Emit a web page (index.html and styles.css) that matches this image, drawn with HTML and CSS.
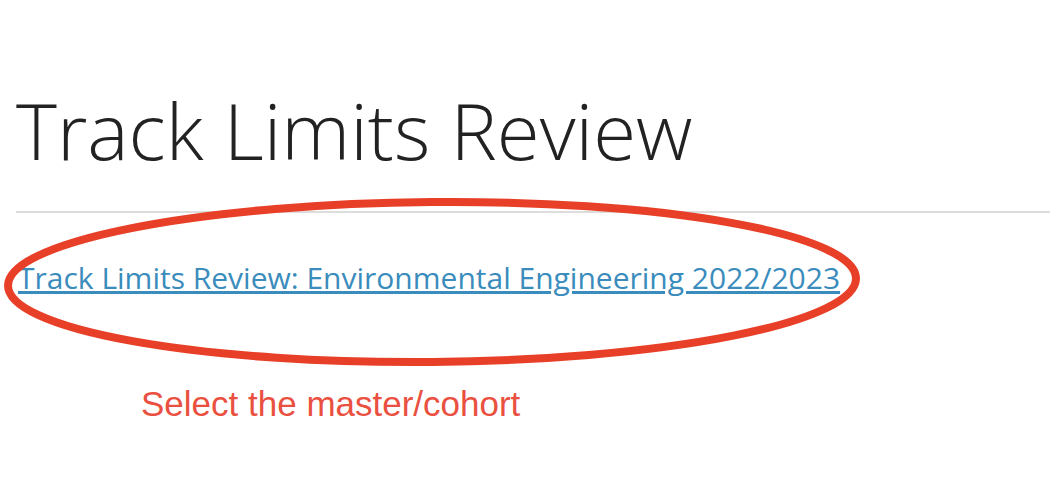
FILE: index.html
```html
<!DOCTYPE html>
<html lang="en">
<head>
    <meta charset="UTF-8">
    <title>Track Limits Review</title>
    <link rel="stylesheet" href="styles.css">
</head>
<body>
    <div class="page">
        <h1 class="title">Track Limits Review</h1>
        <hr class="divider">
        <div class="cohort-list">
            <a class="cohort-link" href="#">Track Limits Review: Environmental Engineering 2022/2023</a>
        </div>
        <p class="note">Select the master/cohort</p>
        <svg class="circle-mark" width="870" height="180" viewBox="0 0 870 180">
            <ellipse cx="432" cy="86" rx="424" ry="80" transform="rotate(-0.5 432 86)" fill="none" stroke="#e84028" stroke-width="8"/>
        </svg>
    </div>
</body>
</html>
```

FILE: styles.css
```css
body {
    margin: 0;
    background: #ffffff;
}
.page {
    position: relative;
    height: 504px;
    overflow: hidden;
}
.title {
    margin: 0;
    padding: 80px 0 0 16px;
    font-family: "Open Sans", sans-serif;
    font-weight: 300;
    font-size: 78px;
    line-height: 100px;
    color: #222222;
}
.divider {
    margin: 31px 0 0 16px;
    border: 0;
    border-top: 2px solid #dddddd;
}
.cohort-list {
    padding: 44px 0 0 18px;
}
.cohort-link {
    font-family: "Open Sans", sans-serif;
    font-size: 30px;
    color: #3a8cbc;
}
.note {
    margin: 86px 0 0 141px;
    font-family: "Liberation Sans", Arial, sans-serif;
    font-size: 35px;
    color: #ea5040;
}
.circle-mark {
    position: absolute;
    left: 0;
    top: 196px;
}
```
